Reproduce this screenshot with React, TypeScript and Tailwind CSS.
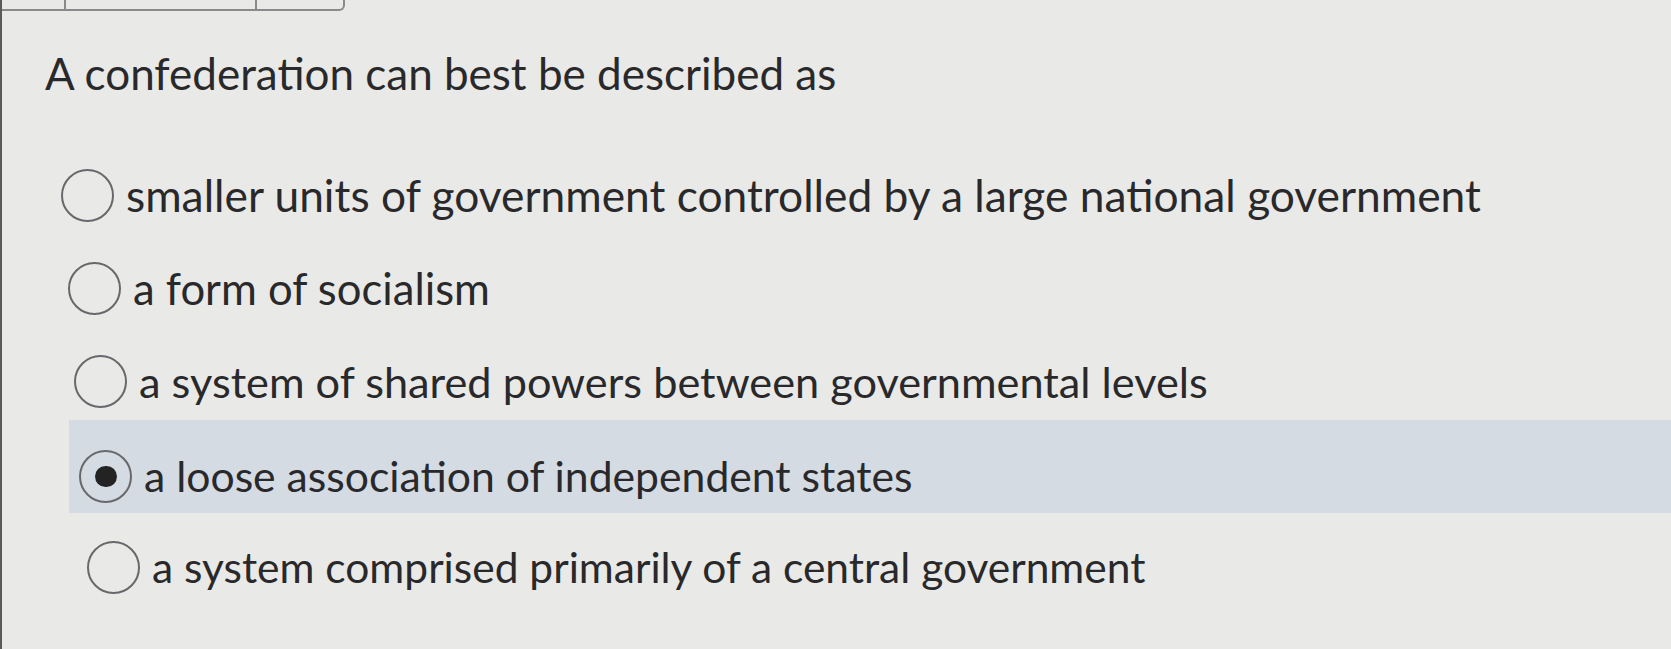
const options = [
  { label: 'smaller units of government controlled by a large national government', indent: 'ml-[59px]', size: 'text-[44.3px]' },
  { label: 'a form of socialism', indent: 'ml-[66px]', size: 'text-[43.6px]' },
  { label: 'a system of shared powers between governmental levels', indent: 'ml-[72px]', size: 'text-[43.3px]' },
  { label: 'a loose association of independent states', indent: 'ml-[10px]', size: 'text-[42.7px]', selected: true },
  { label: 'a system comprised primarily of a central government', indent: 'ml-[85px]', size: 'text-[42.5px]' },
]

function Radio({ checked }: { checked?: boolean }) {
  return (
    <span className="flex h-[53px] w-[53px] shrink-0 items-center justify-center rounded-full border-2 border-[#68686c]">
      {checked && <span className="h-[21px] w-[22px] rounded-full bg-[#232323]" />}
    </span>
  )
}

export default function App() {
  return (
    <div className="relative h-[649px] w-[1671px] overflow-hidden border-l-2 border-[#5a5a5a] bg-[#e9e9e7] font-['Lato','Liberation_Sans',sans-serif] text-[#29292c]">
      <div className="flex h-[11px] w-[343px] rounded-br-md border-b-2 border-r-2 border-[#8a8a8c]">
        <div className="w-[64px] border-r-2 border-[#8a8a8c]" />
        <div className="w-[191px] border-r-2 border-[#8a8a8c]" />
        <div className="flex-1" />
      </div>

      <h1 className="ml-[43px] mt-[36px] text-[44px] leading-[52px]">A confederation can best be described as</h1>

      <div className="mt-[50px] flex flex-col">
        {options.map((option, index) => (
          <div
            key={option.label}
            className={
              option.selected
                ? '-mt-[8px] ml-[67px] flex h-[93px] items-center bg-[#d4dbe2] pt-[20px]'
                : index === 4
                  ? 'mt-[8px] flex h-[93px] items-center'
                  : 'flex h-[93px] items-center'
            }
          >
            <div className={option.indent + ' flex items-center gap-[12px]'}>
              <Radio checked={option.selected} />
              <span className={option.size + ' leading-none'}>{option.label}</span>
            </div>
          </div>
        ))}
      </div>
    </div>
  )
}
